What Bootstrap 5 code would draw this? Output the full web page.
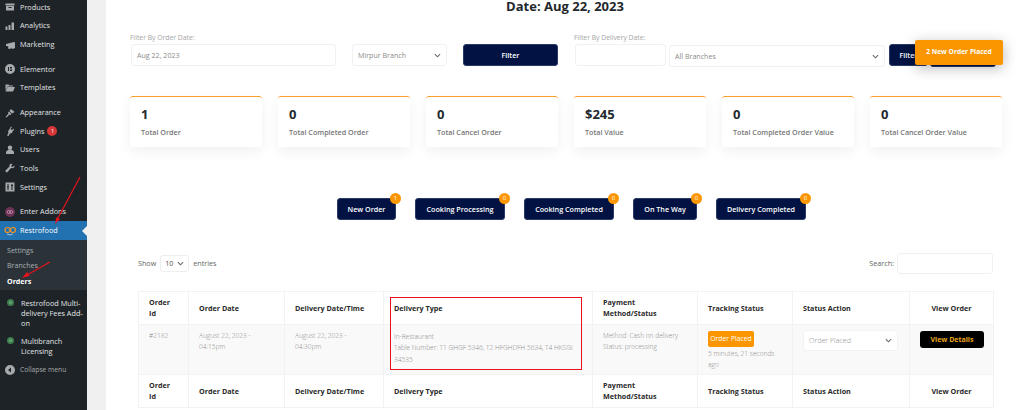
<!DOCTYPE html>
<html lang="en">
<head>
  <meta charset="UTF-8">
  <title>Restrofood Orders</title>
  <link href="https://cdn.jsdelivr.net/npm/bootstrap@5.3.2/dist/css/bootstrap.min.css" rel="stylesheet">
  <style>
    html, body { height: 410px; overflow: hidden; }
    body { font-family: "Open Sans", "Liberation Sans", sans-serif; background: #fff; position: relative; }
    .wp-side { width: 87px; height: 410px; background: #1d2327; color: #e2e4e6; font-size: 7.3px; flex: none; overflow: hidden; }
    .wp-gutter { width: 19px; height: 410px; background: #f0f0f1; flex: none; }
    .wp-item { height: 18.65px; padding-left: 5px; gap: 5px; white-space: nowrap; }
    .wp-item svg { width: 10px; height: 10px; flex: none; fill: #a7aaad; }
    .wp-sep { height: 6px; }
    .wp-first { margin-top: -2px; }
    .wp-active { background: #2271b1; color: #fff; position: relative; height: 19px; }
    .wp-active::after { content: ""; position: absolute; right: 0; top: 5px; border: 5px solid transparent; border-right-color: #f0f0f1; border-left: 0; }
    .wp-logo { margin: 0 -2px; }
    .wp-item svg.wp-logo { width: 14px; }
    .wp-sub { background: #2c3338; padding: 3px 0 5px 7px; color: #a7adb2; font-size: 7.1px; height: 50px; }
    .wp-sub div { height: 15.4px; line-height: 15.4px; }
    .wp-sub .wp-cur { color: #fff; font-weight: 700; }
    .wp-multi { padding: 8px 2px 0 7px; gap: 7px; line-height: 10px; }
    .wp-multi svg { width: 7px; height: 7px; flex: none; margin-top: 1px; }
    .wp-upd { width: 10px; height: 10px; border-radius: 50%; background: #d63638; color: #fff; font-size: 5.5px; line-height: 10px; text-align: center; margin-left: -2px; }
    .wp-collapse { color: #a7aaad; font-size: 6.7px; padding-top: 9px; }

    .page { width: 918px; height: 410px; flex: none; }
    .page-title { font-size: 13px; font-weight: 700; color: #23282d; text-align: center; line-height: 13px; height: 13px; margin: 0; }

    .filter-area { padding: 19px 0 0 24px; height: 83px; }
    .filter-lbl { font-size: 6.8px; color: #a5a5a5; line-height: 12px; height: 12px; margin: 0; }
    .fake-field { height: 22px; border: 1px solid #f1f1f1; border-radius: 3px; background: #fff; font-size: 7.1px; color: #8b8b8b; padding: 0 5px; }
    .chev { width: 7px; height: 5px; margin-left: auto; flex: none; stroke: #666; fill: none; stroke-width: 1.2; }
    .navy-btn { background: #021343; color: #fff; border: 1px solid #2a3a66; border-radius: 3px; font-size: 7.2px; font-weight: 600; height: 22px; padding: 0; }
    .w-date1 { width: 205px; margin-left: 1px; }
    .w-branch1 { width: 95px; margin-left: 16px; }
    .w-go1 { width: 95px; margin-left: 16px; }
    .block-right { margin-left: 16px; }
    .w-date2 { width: 91px; margin-left: 1px; }
    .w-branch2 { width: 216px; margin-left: 3px; margin-top: 1px; }
    .w-go2 { width: 39px; margin-left: 4px; }
    .w-go3 { width: 66px; margin-left: 2px; margin-top: 4px; height: 19px; }
    .new-toast { position: absolute; left: 915px; top: 40px; width: 88px; height: 25px; background: #fb9600; color: #fff; border-radius: 2px; font-size: 6.7px; font-weight: 700; box-shadow: 0 3px 14px rgba(0,0,0,.28); }

    .stats { padding-left: 24px; gap: 16px; }
    .stat-box { width: 132px; height: 51px; border: 0; border-top: 1px solid #f9a12a; border-radius: 3px; box-shadow: 0 5px 14px rgba(0,0,0,.06); padding: 8px 11px; }
    .stat-num { font-size: 13px; font-weight: 700; color: #23282d; line-height: 18px; }
    .stat-txt { font-size: 7.2px; font-weight: 600; color: #757575; line-height: 10px; margin-top: 4px; white-space: nowrap; }

    .status-row { margin-top: 51px; padding-left: 231px; gap: 19px; }
    .status-btn { position: relative; height: 22px; }
    .b1 { width: 59px; } .b2 { width: 90px; } .b3 { width: 90px; } .b4 { width: 64px; }
    .dot { position: absolute; right: -6px; top: -6px; width: 11px; height: 11px; border-radius: 50%; background: #fb9600; color: #fff; font-size: 6px; font-weight: 400; line-height: 11px; text-align: center; }

    .entries { padding: 33px 31px 0 32px; height: 71px; font-size: 7.2px; color: #666; }
    .entries-show { margin-top: 2px; }
    .entries-sel { width: 29px; height: 17px; border: 1px solid #eee; border-radius: 3px; padding: 0 4px; margin: 0 4px; font-size: 7.2px; color: #555; }
    .entries-in { width: 96px; height: 21px; border: 1px solid #f0f0f0; border-radius: 3px; margin-left: 3px; }

    .orders-wrap { margin-left: 32px; width: 855px; }
    .orders { table-layout: fixed; width: 855px; margin: 0; border-collapse: collapse; font-size: 6.6px; }
    .orders td, .orders th { border: 1px solid #f2f2f2; padding: 0 10px; vertical-align: middle; color: #8c8c8c; font-weight: 300; line-height: 10.5px; box-shadow: none; }
    .orders th { color: #2a2a2a; font-weight: 700; font-size: 7.2px; line-height: 11px; height: 33px; background: #fff; }
    .orders tbody td { background: #f9f9f9; height: 50px; vertical-align: top; padding-top: 6px; }
    .orders .ctr { text-align: center; }
    .c1 { width: 50px; } .c2 { width: 96px; } .c3 { width: 99px; } .c4 { width: 209px; }
    .c5 { width: 105px; } .c6 { width: 95px; } .c7 { width: 117px; } .c8 { width: 84px; }
    .orders td.dtype { line-height: 11.4px; }
    .placed { display: inline-block; background: #fb9600; color: #fff; border-radius: 2px; font-size: 6.8px; font-weight: 400; height: 16px; line-height: 16px; width: 46px; text-align: center; white-space: nowrap; margin-bottom: 2px; }
    .action-sel { width: 95px; height: 21px; background: #fff; border: 1px solid #f2f2f2; margin-top: -1px; }
    .details-btn { background: #000; color: #e9a51c; font-weight: 700; font-size: 7px; border-radius: 3px; width: 64px; height: 17px; line-height: 17px; margin: 0 auto; }

    .red-box { position: absolute; left: 390px; top: 297px; width: 192px; height: 73px; border: 1.5px solid #ee0f1c; pointer-events: none; }
    .red-arrows { position: absolute; left: 0; top: 0; width: 130px; height: 410px; pointer-events: none; }
  </style>
</head>
<body>
  <div class="d-flex">
    <!-- wp admin menu -->
    <div class="wp-side">
      <div class="wp-item d-flex align-items-center wp-first"><svg viewBox="0 0 20 20"><path d="M1 3h18v4H1zM2 8h16v9H2zM7 10v2h6v-2z" fill-rule="evenodd"/></svg>Products</div>
      <div class="wp-item d-flex align-items-center"><svg viewBox="0 0 20 20"><path d="M1 11h4v7H1zM7 8h4v10H7zM13 3h5v15h-5z"/></svg>Analytics</div>
      <div class="wp-item d-flex align-items-center"><svg viewBox="0 0 20 20"><path d="M18 4a7 7 0 1 1-9 9L2 12V8zM6 13h4l1 5H7z"/></svg>Marketing</div>
      <div class="wp-sep"></div>
      <div class="wp-item d-flex align-items-center"><svg viewBox="0 0 20 20"><path d="M10 0a10 10 0 1 0 0 20 10 10 0 0 0 0-20zM6 6h2v8H6zM10 6h4v2h-4zM10 9h4v2h-4zM10 12h4v2h-4z" fill-rule="evenodd"/></svg>Elementor</div>
      <div class="wp-item d-flex align-items-center"><svg viewBox="0 0 20 20"><path d="M1 3h6l2 2h7v2H5L1 15zM5 8h15l-4 9H1z"/></svg>Templates</div>
      <div class="wp-sep"></div>
      <div class="wp-item d-flex align-items-center"><svg viewBox="0 0 20 20"><path d="M12 2l7 6-5 3-5-5zM8 7l5 5-2 2-2-1-6 6-2-1 6-7-1-2z"/></svg>Appearance</div>
      <div class="wp-item d-flex align-items-center"><svg viewBox="0 0 20 20"><path d="M12 1l2 1-3 4 3 2 3-3 1 2-3 4-1 3-4 1-3 5-3-1 3-5-1-4 2-2z"/></svg>Plugins<span class="wp-upd">1</span></div>
      <div class="wp-item d-flex align-items-center"><svg viewBox="0 0 20 20"><path d="M10 1a4.5 4.5 0 1 1 0 9 4.5 4.5 0 0 1 0-9zM2 18v-3c0-3 3-5 5-5h6c2 0 5 2 5 5v3z"/></svg>Users</div>
      <div class="wp-item d-flex align-items-center"><svg viewBox="0 0 20 20"><path d="M19 5l-4 3-3-2 3-4c-4-2-7 1-6 5L1 15c-1 2 2 5 4 3l7-8c4 1 8-1 7-5z"/></svg>Tools</div>
      <div class="wp-item d-flex align-items-center"><svg viewBox="0 0 20 20"><path d="M1 1h18v18H1zM5 4v5H4v2h1v5h2v-5h1V9H7V4zM13 4v2h-1v2h1v8h2V8h1V6h-1V4z" fill-rule="evenodd"/></svg>Settings</div>
      <div class="wp-sep"></div>
      <div class="wp-item d-flex align-items-center"><svg viewBox="0 0 20 20"><circle cx="10" cy="10" r="10" fill="#6d3357"/><circle cx="7.5" cy="10" r="3" fill="none" stroke="#c9a0b8" stroke-width="1.4"/><circle cx="12.5" cy="10" r="3" fill="none" stroke="#c9a0b8" stroke-width="1.4"/></svg>Enter Addons</div>
      <div class="wp-item wp-active d-flex align-items-center"><svg class="wp-logo" viewBox="0 0 24 20"><circle cx="7" cy="8" r="5" fill="none" stroke="#f7931e" stroke-width="2.4"/><circle cx="18" cy="8" r="5" fill="none" stroke="#f7931e" stroke-width="2.4"/><path d="M6 16q6 4 12 0" fill="none" stroke="#d8dde2" stroke-width="1.4"/></svg>Restrofood</div>
      <div class="wp-sub">
        <div>Settings</div>
        <div>Branches</div>
        <div class="wp-cur">Orders</div>
      </div>
      <div class="wp-multi d-flex"><svg viewBox="0 0 20 20"><circle cx="10" cy="10" r="10" fill="#3f7d4e"/><circle cx="10" cy="10" r="5" fill="#5da06c"/></svg><span>Restrofood Multi-delivery Fees Add-on</span></div>
      <div class="wp-multi d-flex"><svg viewBox="0 0 20 20"><circle cx="10" cy="10" r="10" fill="#3f7d4e"/><circle cx="10" cy="10" r="5" fill="#5da06c"/></svg><span>Multibranch Licensing</span></div>
      <div class="wp-item wp-collapse d-flex align-items-center"><svg viewBox="0 0 20 20"><path d="M10 0a10 10 0 1 0 0 20 10 10 0 0 0 0-20zM12 5v10L6 10z" fill-rule="evenodd"/></svg>Collapse menu</div>
    </div>
    <div class="wp-gutter"></div>

    <div class="page">
      <h1 class="page-title">Date: Aug 22, 2023</h1>

      <div class="filter-area d-flex">
        <div>
          <p class="filter-lbl">Filter By Order Date:</p>
          <div class="d-flex">
            <div class="fake-field w-date1 d-flex align-items-center">Aug 22, 2023</div>
            <div class="fake-field w-branch1 d-flex align-items-center">Mirpur Branch<svg class="chev" viewBox="0 0 8 5"><path d="M1 1l3 3 3-3"/></svg></div>
            <button class="navy-btn w-go1">Filter</button>
          </div>
        </div>
        <div class="block-right">
          <p class="filter-lbl">Filter By Delivery Date:</p>
          <div class="d-flex">
            <div class="fake-field w-date2"></div>
            <div class="fake-field w-branch2 d-flex align-items-center">All Branches<svg class="chev" viewBox="0 0 8 5"><path d="M1 1l3 3 3-3"/></svg></div>
            <button class="navy-btn w-go2">Filter</button>
            <button class="navy-btn w-go3"></button>
          </div>
        </div>
      </div>

      <div class="stats d-flex">
        <div class="card stat-box"><div class="stat-num">1</div><div class="stat-txt">Total Order</div></div>
        <div class="card stat-box"><div class="stat-num">0</div><div class="stat-txt">Total Completed Order</div></div>
        <div class="card stat-box"><div class="stat-num">0</div><div class="stat-txt">Total Cancel Order</div></div>
        <div class="card stat-box"><div class="stat-num">$245</div><div class="stat-txt">Total Value</div></div>
        <div class="card stat-box"><div class="stat-num">0</div><div class="stat-txt">Total Completed Order Value</div></div>
        <div class="card stat-box"><div class="stat-num">0</div><div class="stat-txt">Total Cancel Order Value</div></div>
      </div>

      <div class="status-row d-flex">
        <button class="navy-btn status-btn b1">New Order<span class="dot">1</span></button>
        <button class="navy-btn status-btn b2">Cooking Processing<span class="dot">0</span></button>
        <button class="navy-btn status-btn b3">Cooking Completed<span class="dot">0</span></button>
        <button class="navy-btn status-btn b4">On The Way<span class="dot">0</span></button>
        <button class="navy-btn status-btn b2">Delivery Completed<span class="dot">0</span></button>
      </div>

      <div class="entries d-flex align-items-start justify-content-between">
        <div class="entries-show d-flex align-items-center">Show<div class="entries-sel d-flex align-items-center">10<svg class="chev" viewBox="0 0 8 5"><path d="M1 1l3 3 3-3"/></svg></div>entries</div>
        <div class="d-flex align-items-center">Search:<div class="entries-in"></div></div>
      </div>

      <div class="orders-wrap">
        <table class="table orders">
          <colgroup><col class="c1"><col class="c2"><col class="c3"><col class="c4"><col class="c5"><col class="c6"><col class="c7"><col class="c8"></colgroup>
          <thead>
            <tr><th>Order Id</th><th>Order Date</th><th>Delivery Date/Time</th><th>Delivery Type</th><th>Payment Method/Status</th><th>Tracking Status</th><th>Status Action</th><th class="ctr">View Order</th></tr>
          </thead>
          <tbody>
            <tr>
              <td>#2182</td>
              <td>August 22, 2023 - 04:15pm</td>
              <td>August 22, 2023 - 04:30pm</td>
              <td class="dtype">In-Restaurant<br>Table Number: T1 GHGF 5346, T2 HFGHDFH 5634, T4 HKSGI 34535</td>
              <td>Method: Cash on delivery<br>Status: processing</td>
              <td><span class="placed">Order Placed</span><br>5 minutes, 21 seconds ago</td>
              <td><div class="fake-field action-sel d-flex align-items-center">Order Placed<svg class="chev" viewBox="0 0 8 5"><path d="M1 1l3 3 3-3"/></svg></div></td>
              <td class="ctr"><div class="details-btn">View Details</div></td>
            </tr>
          </tbody>
          <tfoot>
            <tr><th>Order Id</th><th>Order Date</th><th>Delivery Date/Time</th><th>Delivery Type</th><th>Payment Method/Status</th><th>Tracking Status</th><th>Status Action</th><th class="ctr">View Order</th></tr>
          </tfoot>
        </table>
      </div>
    </div>
  </div>

  <div class="new-toast d-flex align-items-center justify-content-center">2 New Order Placed</div>
  <div class="red-box"></div>
  <svg class="red-arrows" viewBox="0 0 130 410">
    <path d="M80 177L58 218" stroke="#e4141c" stroke-width="1.2" fill="none"/>
    <path d="M55 224l1.5-7 3.5 2z" fill="#e4141c"/>
    <path d="M50 262L27 275" stroke="#e4141c" stroke-width="1.2" fill="none"/>
    <path d="M22 278l5-6 2.5 4z" fill="#e4141c"/>
  </svg>
</body>
</html>
